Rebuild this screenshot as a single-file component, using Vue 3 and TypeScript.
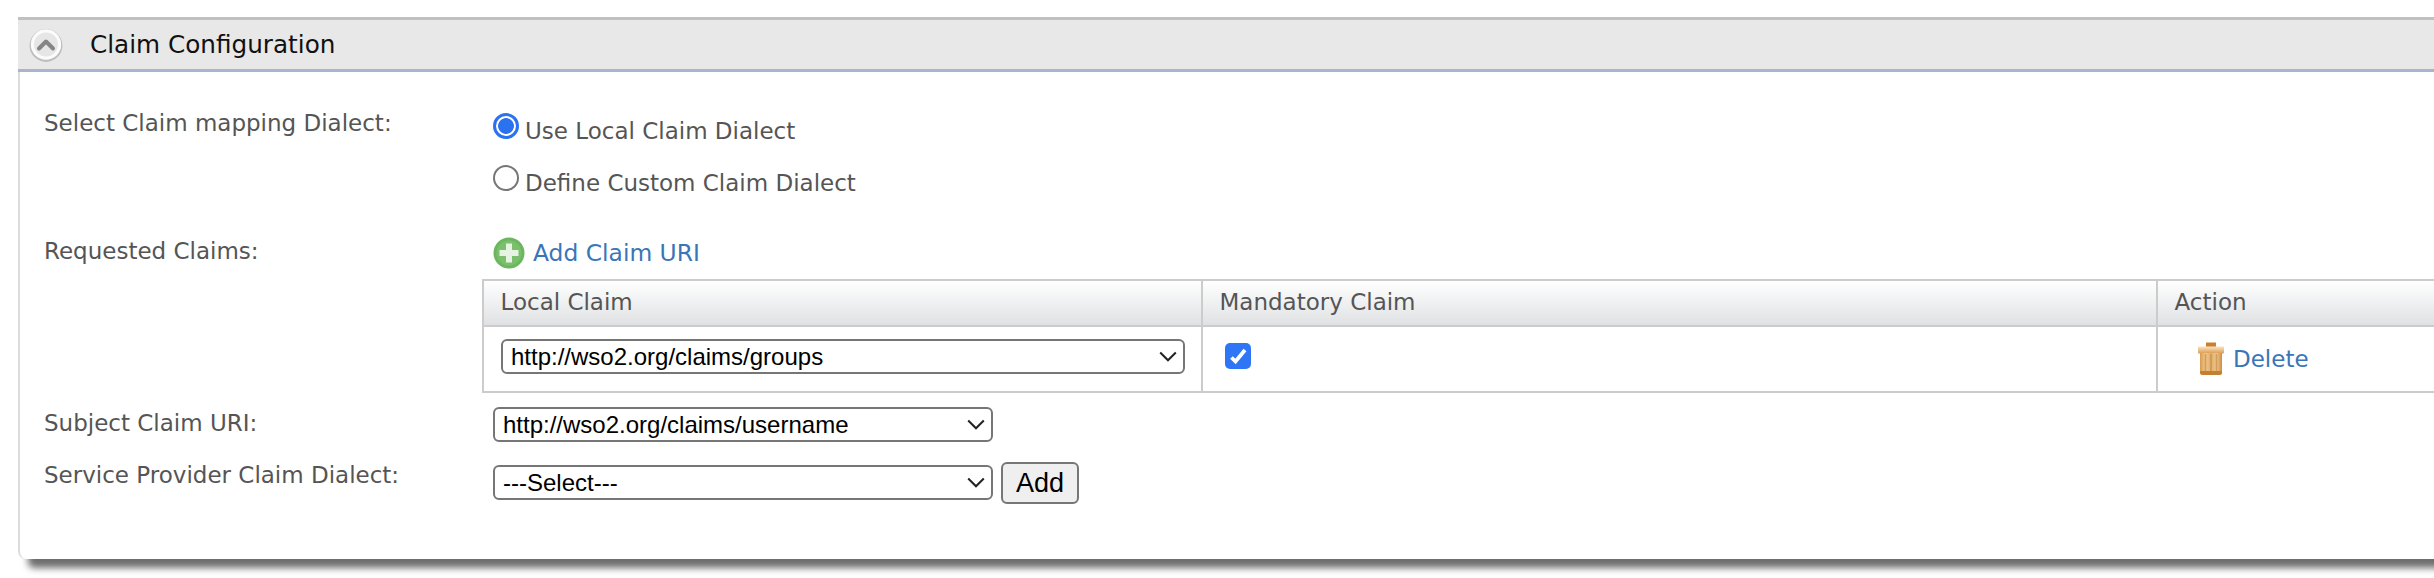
<script setup lang="ts">
const claimOptions: string[] = ['http://wso2.org/claims/groups']
const subjectOptions: string[] = ['http://wso2.org/claims/username']
const dialectOptions: string[] = ['---Select---']
</script>

<template>
  <div class="page">
    <section class="card">
      <header class="card-head">
        <svg class="toggle" width="34" height="34" viewBox="0 0 34 34" aria-hidden="true">
          <circle cx="17" cy="17.5" r="16.4" fill="#bdbdbd" />
          <circle cx="17" cy="16.5" r="15.2" fill="#fbfbfb" />
          <circle cx="17" cy="16.5" r="12" fill="#e6e6e6" />
          <path d="M10 20.5 L17 13.5 L24 20.5" fill="none" stroke="#858585" stroke-width="4" stroke-linecap="round" stroke-linejoin="round" />
        </svg>
        <h2 class="card-title">Claim Configuration</h2>
      </header>

      <div class="card-body">
        <div class="row row-dialect">
          <div class="label">Select Claim mapping Dialect:</div>
          <div class="field">
            <label class="radio-line">
              <input type="radio" name="dialect" checked />
              <span>Use Local Claim Dialect</span>
            </label>
            <label class="radio-line">
              <input type="radio" name="dialect" />
              <span>Define Custom Claim Dialect</span>
            </label>
          </div>
        </div>

        <div class="row row-requested">
          <div class="label">Requested Claims:</div>
          <div class="requested">
            <a class="add-link">
              <svg width="32" height="32" viewBox="0 0 32 32" aria-hidden="true">
                <circle cx="16" cy="16" r="15.5" fill="#6db660" />
                <circle cx="16" cy="16" r="12.5" fill="#79bf6c" />
                <path d="M13 6.5h6v6.5h6.5v6H19v6.5h-6V19H6.5v-6H13z" fill="#e6f3e2" />
              </svg>
              <span>Add Claim URI</span>
            </a>
            <table class="claims">
              <colgroup>
                <col class="c-local" />
                <col class="c-mand" />
                <col class="c-action" />
              </colgroup>
              <thead>
                <tr>
                  <th>Local Claim</th>
                  <th>Mandatory Claim</th>
                  <th>Action</th>
                </tr>
              </thead>
              <tbody>
                <tr>
                  <td class="td-select">
                    <span class="select-wrap wide">
                      <select>
                        <option v-for="o in claimOptions" :key="o">{{ o }}</option>
                      </select>
                      <svg class="chev" width="18" height="11" viewBox="0 0 18 11" aria-hidden="true"><path d="M1.2 1.5 L9 9.3 L16.8 1.5" fill="none" stroke="#222" stroke-width="2" /></svg>
                    </span>
                  </td>
                  <td class="td-check"><input type="checkbox" checked /></td>
                  <td class="td-action">
                    <a class="delete-link">
                      <svg width="28" height="34" viewBox="0 0 28 34" aria-hidden="true">
                        <defs>
                          <linearGradient id="binBody" x1="0" y1="0" x2="1" y2="0">
                            <stop offset="0" stop-color="#d99a4e" />
                            <stop offset="0.25" stop-color="#efc88e" />
                            <stop offset="0.5" stop-color="#e0ad6a" />
                            <stop offset="0.75" stop-color="#edc88f" />
                            <stop offset="1" stop-color="#cf8c40" />
                          </linearGradient>
                          <linearGradient id="binLid" x1="0" y1="0" x2="0" y2="1">
                            <stop offset="0" stop-color="#fbe3c1" />
                            <stop offset="1" stop-color="#dd9c55" />
                          </linearGradient>
                        </defs>
                        <path d="M9 0.5h10v5H9z" fill="#c9802e" />
                        <path d="M2 4.5h24a1 1 0 0 1 1 1v5a1 1 0 0 1-1 1H2a1 1 0 0 1-1-1v-5a1 1 0 0 1 1-1z" fill="url(#binLid)" />
                        <path d="M3 11h22v19q0 3-3 3H6q-3 0-3-3z" fill="url(#binBody)" />
                        <path d="M8.5 12v19M14 12v19M19.5 12v19" stroke="#c98d45" stroke-width="1.6" opacity=".7" />
                        <path d="M3 29h22v1.5q0 2.5-3 2.5H6q-3 0-3-2.5z" fill="#c47f33" />
                      </svg>
                      <span>Delete</span>
                    </a>
                  </td>
                </tr>
              </tbody>
            </table>
          </div>
        </div>

        <div class="row row-subject">
          <div class="label">Subject Claim URI:</div>
          <div class="field">
            <span class="select-wrap">
              <select>
                <option v-for="o in subjectOptions" :key="o">{{ o }}</option>
              </select>
              <svg class="chev" width="18" height="11" viewBox="0 0 18 11" aria-hidden="true"><path d="M1.2 1.5 L9 9.3 L16.8 1.5" fill="none" stroke="#222" stroke-width="2" /></svg>
            </span>
          </div>
        </div>

        <div class="row row-provider">
          <div class="label">Service Provider Claim Dialect:</div>
          <div class="field inline">
            <span class="select-wrap">
              <select>
                <option v-for="o in dialectOptions" :key="o">{{ o }}</option>
              </select>
              <svg class="chev" width="18" height="11" viewBox="0 0 18 11" aria-hidden="true"><path d="M1.2 1.5 L9 9.3 L16.8 1.5" fill="none" stroke="#222" stroke-width="2" /></svg>
            </span>
            <button class="add-btn" type="button">Add</button>
          </div>
        </div>
      </div>
    </section>
  </div>
</template>

<style>
html, body { margin: 0; background: #fff; overflow: hidden; }
</style>

<style scoped>
.page {
  width: 2434px;
  height: 578px;
  overflow: hidden;
  padding: 17px 0 0 18px;
  box-sizing: border-box;
  font-family: "DejaVu Sans", sans-serif;
  font-size: 23px;
  color: #555;
}
.card {
  width: 2500px;
  height: 542px;
  box-sizing: border-box;
  background: #fff;
  border-left: 2px solid #dcdcdc;
  border-radius: 0 0 0 8px;
  box-shadow: 8px 11px 7px -2px #6e6e6e;
}
.card-head {
  height: 55px;
  box-sizing: border-box;
  display: flex;
  align-items: center;
  background: #e8e8e8;
  border-top: 3px solid #c0c0c0;
  border-bottom: 3px solid #a9b5cc;
  margin-left: -2px;
  padding-left: 11px;
}
.toggle { flex: none; filter: blur(.6px); }
.card-title {
  margin: 0 0 0 27px;
  font-size: 24.7px;
  font-weight: 400;
  color: #111;
}
.card-body { padding: 36px 0 0 24px; }
.row { display: grid; grid-template-columns: 440px 1fr; }
.label { line-height: 30px; }
.field { padding-left: 9px; }
.field.inline { display: flex; align-items: flex-start; gap: 8px; }
.row-dialect { height: 125px; }
.row-requested { height: 174px; }
.row-requested .label { padding-top: 3px; }
.row-subject { height: 58px; }
.row-subject .label { padding-top: 1px; }
.row-provider .label { margin-top: -5px; }
.radio-line { display: flex; height: 52px; }
.radio-line input {
  appearance: none;
  width: 26px;
  height: 26px;
  margin: 5px 6px 0 0;
  flex: none;
  box-sizing: border-box;
  border: 2.5px solid #767676;
  border-radius: 50%;
  background: #fff;
}
.radio-line input:checked {
  border: 3px solid #2a72f0;
  background: radial-gradient(circle at center, #2a72f0 0 7.5px, #fff 8.2px);
}
.radio-line span { line-height: 36px; padding-top: 5px; }
.add-link { display: inline-flex; align-items: center; gap: 8px; margin-left: 9px; height: 40px; font-size: 23.4px; color: #3a75b8; }
.add-link svg { filter: blur(.4px); }
.claims {
  border-collapse: collapse;
  table-layout: fixed;
  width: 2000px;
  margin: 5px 0 0 -2px;
  font-size: 23px;
}
.c-local { width: 719px; }
.c-mand { width: 955px; }
.c-action { width: 326px; }
.claims th {
  height: 42px;
  padding: 0 0 2px 16.5px;
  text-align: left;
  font-weight: 400;
  color: #555;
  background: linear-gradient(#ffffff, #dfe1e3);
  border: 2px solid #cccccc;
}
.claims td {
  height: 66px;
  padding: 0 0 0 17px;
  border: 2px solid #cccccc;
  box-sizing: border-box;
}
.claims .td-select { padding-bottom: 5px; }
.td-check input {
  appearance: none;
  display: block;
  width: 26px;
  height: 26px;
  margin: 0 0 7px 5px;
  border-radius: 5px;
  background: #2f76f6 url("data:image/svg+xml,%3Csvg xmlns='http://www.w3.org/2000/svg' width='26' height='26'%3E%3Cpath d='M6.5 14.5 L10.5 18.5 L20 7' fill='none' stroke='white' stroke-width='3.8'/%3E%3C/svg%3E") center no-repeat;
}
.claims .td-action { padding: 5px 0 0 39px; }
.delete-link { display: inline-flex; align-items: center; gap: 8px; color: #3a75b8; }
.delete-link svg { width: 28px; height: 34px; filter: blur(.4px); }
.select-wrap { position: relative; display: inline-block; width: 500px; height: 35px; }
.select-wrap.wide { width: 684px; display: block; }
.select-wrap select {
  appearance: none;
  display: block;
  width: 100%;
  height: 100%;
  box-sizing: border-box;
  padding: 0 30px 0 8px;
  border: 2px solid #767676;
  border-radius: 6px;
  background: #fff;
  color: #000;
  font-family: "Liberation Sans", Arial, sans-serif;
  font-size: 24px;
}
.chev { position: absolute; right: 8px; top: 12px; pointer-events: none; }
.add-btn {
  width: 78px;
  height: 42px;
  margin-top: -3px;
  box-sizing: border-box;
  border: 2px solid #767676;
  border-radius: 6px;
  background: #efefef;
  color: #000;
  font-family: "Liberation Sans", Arial, sans-serif;
  font-size: 27px;
  padding: 0;
}
</style>
